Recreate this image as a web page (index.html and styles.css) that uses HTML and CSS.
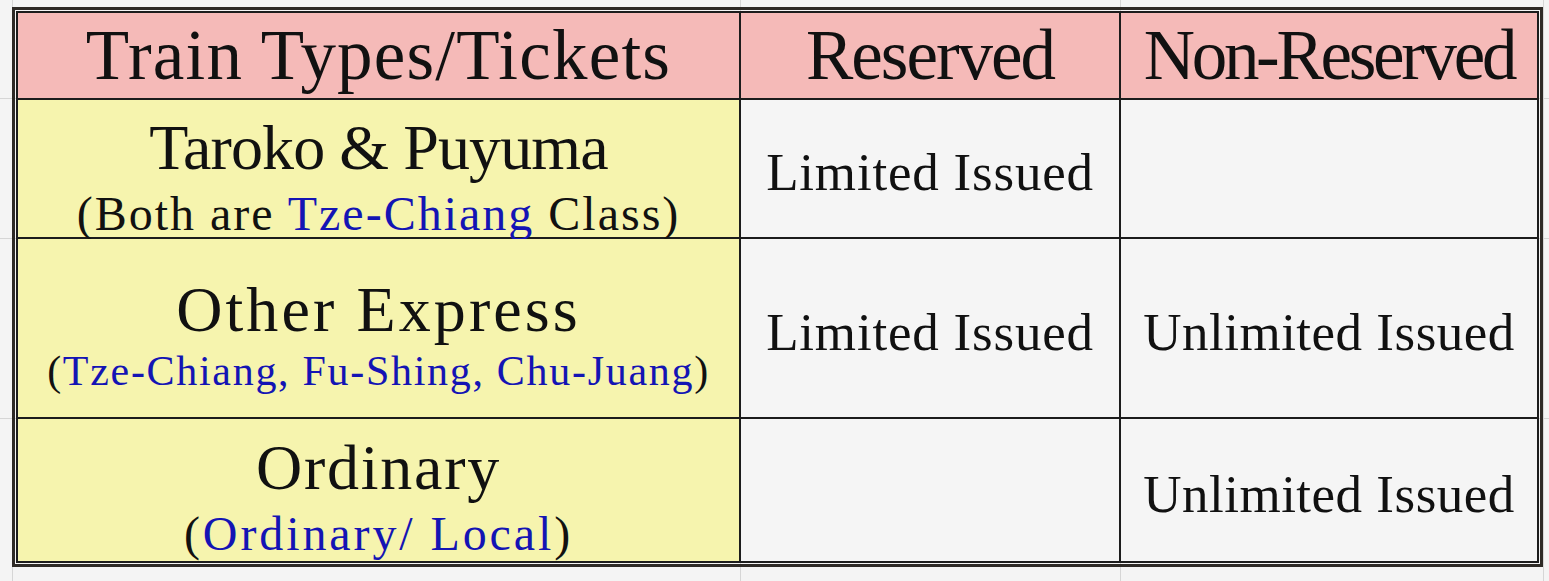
FILE: index.html
```html
<!DOCTYPE html>
<html lang="en">
<head>
<meta charset="utf-8">
<title>Train Types / Tickets</title>
<link rel="stylesheet" href="styles.css">
</head>
<body>
<div class="sheet">
  <div class="table">
    <div class="cell head"><span class="h-types">Train Types/Tickets</span></div>
    <div class="cell head"><span class="h-res">Reserved</span></div>
    <div class="cell head"><span class="h-nonres">Non-Reserved</span></div>

    <div class="cell type row1">
      <span class="title t-taroko">Taroko &amp; Puyuma</span>
      <span class="sub s-both">(Both are <span class="blue">Tze-Chiang</span> Class)</span>
    </div>
    <div class="cell plain row1"><span class="val v-lim">Limited Issued</span></div>
    <div class="cell plain row1"></div>

    <div class="cell type row2">
      <span class="title t-other">Other Express</span>
      <span class="sub sub-sm s-list">(<span class="blue">Tze-Chiang, Fu-Shing, Chu-Juang</span>)</span>
    </div>
    <div class="cell plain row2"><span class="val v-lim">Limited Issued</span></div>
    <div class="cell plain row2"><span class="val v-unlim">Unlimited Issued</span></div>

    <div class="cell type row3">
      <span class="title t-ord">Ordinary</span>
      <span class="sub s-ord">(<span class="blue">Ordinary/ Local</span>)</span>
    </div>
    <div class="cell plain row3"></div>
    <div class="cell plain row3"><span class="val v-unlim">Unlimited Issued</span></div>
  </div>
</div>
</body>
</html>
```

FILE: styles.css
```css
html, body {
  margin: 0;
  padding: 0;
}

body {
  width: 1549px;
  height: 581px;
  overflow: hidden;
  background-color: #f4f4f4;
  background-image:
    linear-gradient(to right, transparent 12px, #d6d6d6 12px, #d6d6d6 13px, transparent 13px),
    linear-gradient(to right, transparent 740px, #d6d6d6 740px, #d6d6d6 741px, transparent 741px),
    linear-gradient(to right, transparent 1120px, #d6d6d6 1120px, #d6d6d6 1121px, transparent 1121px),
    linear-gradient(to right, transparent 1543px, #d6d6d6 1543px, #d6d6d6 1544px, transparent 1544px),
    linear-gradient(to bottom, transparent 98px, #d6d6d6 98px, #d6d6d6 99px, transparent 99px),
    linear-gradient(to bottom, transparent 238px, #d6d6d6 238px, #d6d6d6 239px, transparent 239px),
    linear-gradient(to bottom, transparent 418px, #d6d6d6 418px, #d6d6d6 419px, transparent 419px);
  font-family: "Liberation Serif", "Times New Roman", serif;
  color: #111;
}

.sheet {
  padding: 11px 0 0 16px;
}

.table {
  width: 1519px;
  display: grid;
  grid-template-columns: 721px 378px 416px;
  grid-template-rows: 85px 137px 178px 142px;
  gap: 2px;
  background: #1c1c1c;
  border: 2px solid #1c1c1c;
  outline: 3px solid #2e2a26;
  outline-offset: 1px;
}

.cell {
  display: flex;
  flex-direction: column;
  align-items: center;
  justify-content: center;
  white-space: nowrap;
}

.head {
  background: #f5bab8;
  font-size: 71px;
  line-height: 71px;
}

.h-types { letter-spacing: 1.2px; }
.h-res { letter-spacing: -2px; }
.h-nonres { letter-spacing: -3.3px; }

.type {
  background: #f6f4ae;
}

.plain {
  background: #f5f5f5;
  padding-top: 8px;
}

.title {
  font-size: 64px;
  line-height: 64px;
}

.sub {
  font-size: 48px;
  line-height: 40px;
  margin-top: 14px;
}

.sub-sm {
  font-size: 42px;
  line-height: 36px;
  margin-top: 11px;
}

.blue {
  color: #1414b4;
}

.row1.type { padding-top: 13px; }
.row2.type { padding-top: 11px; }
.row3.type { padding-top: 10px; }

.t-taroko { letter-spacing: -0.9px; }
.t-other { letter-spacing: 3.1px; }
.t-ord { letter-spacing: 1.75px; }

.s-both { letter-spacing: 2px; }
.s-list { letter-spacing: 1.7px; }
.s-ord { letter-spacing: 2.9px; }

.val {
  font-size: 53px;
  line-height: 53px;
}

.v-lim { letter-spacing: 0.8px; }
.v-unlim { letter-spacing: 0.5px; }
```
